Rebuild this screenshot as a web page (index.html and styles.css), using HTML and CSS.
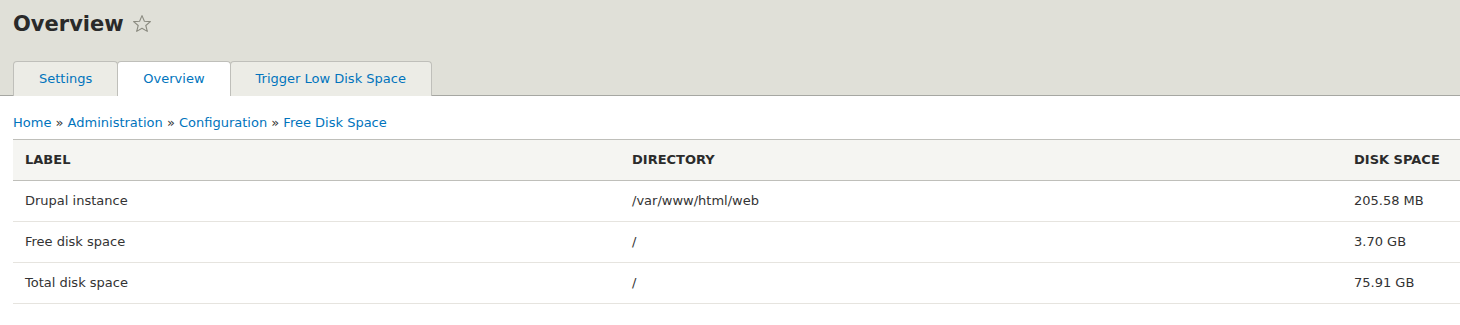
FILE: index.html
```html
<!DOCTYPE html>
<html lang="en">
<head>
  <meta charset="UTF-8">
  <meta name="viewport" content="width=device-width, initial-scale=1.0">
  <title>Overview | Free Disk Space</title>
  <link rel="stylesheet" href="styles.css">
</head>
<body>
  <header class="page-header">
    <div class="title-row">
      <h1 class="page-title">Overview</h1>
      <button type="button" class="shortcut-star" aria-label="Add to shortcuts">
        <svg viewBox="0 0 20 20" xmlns="http://www.w3.org/2000/svg">
          <path d="M10 1.6 L12.4 7.2 L18.4 7.6 L13.8 11.5 L15.3 17.4 L10 14.2 L4.7 17.4 L6.2 11.5 L1.6 7.6 L7.6 7.2 Z"
                fill="none" stroke="currentColor" stroke-width="1.1" stroke-linejoin="round"/>
        </svg>
      </button>
    </div>
    <nav class="tabs">
      <a class="tab" href="#">Settings</a>
      <a class="tab is-active" href="#">Overview</a>
      <a class="tab" href="#">Trigger Low Disk Space</a>
    </nav>
  </header>

  <main class="page-content">
    <nav class="breadcrumb">
      <a href="#">Home</a> » <a href="#">Administration</a> » <a href="#">Configuration</a> » <a href="#">Free Disk Space</a>
    </nav>

    <table class="disk-table">
      <thead>
        <tr>
          <th class="col-label">Label</th>
          <th class="col-dir">Directory</th>
          <th class="col-space">Disk space</th>
        </tr>
      </thead>
      <tbody>
        <tr>
          <td>Drupal instance</td>
          <td>/var/www/html/web</td>
          <td>205.58 MB</td>
        </tr>
        <tr>
          <td>Free disk space</td>
          <td>/</td>
          <td>3.70 GB</td>
        </tr>
        <tr>
          <td>Total disk space</td>
          <td>/</td>
          <td>75.91 GB</td>
        </tr>
      </tbody>
    </table>
  </main>
</body>
</html>
```

FILE: styles.css
```css
:root {
  --color-header-bg: #e0e0d8;
  --color-tab-bg: #ececE6;
  --color-tab-border: #bfbfba;
  --color-header-border: #a6a7a2;
  --color-link: #0074bd;
  --color-text: #333333;
  --color-thead-bg: #f5f5f2;
  --color-row-border: #e6e4df;
  --font-primary: "DejaVu Sans", Verdana, sans-serif;
}

* {
  box-sizing: border-box;
  margin: 0;
  padding: 0;
}

body {
  font-family: var(--font-primary);
  font-size: 13px;
  color: var(--color-text);
  background: #ffffff;
}

a {
  color: var(--color-link);
  text-decoration: none;
}

/* Header */
.page-header {
  background-color: var(--color-header-bg);
  border-bottom: 1px solid var(--color-header-border);
  padding: 11px 0 0 13px;
}

.title-row {
  display: flex;
  align-items: center;
  gap: 8px;
}

.page-title {
  font-size: 21px;
  font-weight: bold;
  line-height: 26px;
  color: #2a2a2a;
}

.shortcut-star {
  display: flex;
  width: 20px;
  height: 20px;
  border: none;
  background: none;
  color: #8b8b80;
  margin-top: -1px;
}

.shortcut-star svg {
  width: 20px;
  height: 20px;
}

/* Tabs */
.tabs {
  display: flex;
  margin-top: 24px;
}

.tab {
  display: block;
  padding: 9px 25px;
  line-height: 16px;
  background-color: var(--color-tab-bg);
  border: 1px solid var(--color-tab-border);
  border-bottom: none;
  border-radius: 4px 4px 0 0;
  margin-right: -1px;
  margin-bottom: -1px;
  height: 35px;
}

.tab.is-active {
  background-color: #ffffff;
  position: relative;
  z-index: 1;
}

/* Content */
.page-content {
  padding-left: 13px;
}

.breadcrumb {
  margin-top: 17px;
  line-height: 20px;
  color: var(--color-text);
}

/* Table */
.disk-table {
  width: 100%;
  margin-top: 6px;
  border-collapse: collapse;
  table-layout: fixed;
}

.disk-table th,
.disk-table td {
  text-align: left;
  padding: 10px 12px;
  line-height: 20px;
}

.disk-table thead th {
  background-color: var(--color-thead-bg);
  border-top: 1px solid var(--color-tab-border);
  border-bottom: 1px solid var(--color-tab-border);
  text-transform: uppercase;
  font-weight: bold;
  color: #2b2b2b;
}

.disk-table tbody td {
  border-bottom: 1px solid var(--color-row-border);
}

.col-label {
  width: 607px;
}

.col-dir {
  width: 722px;
}
```
